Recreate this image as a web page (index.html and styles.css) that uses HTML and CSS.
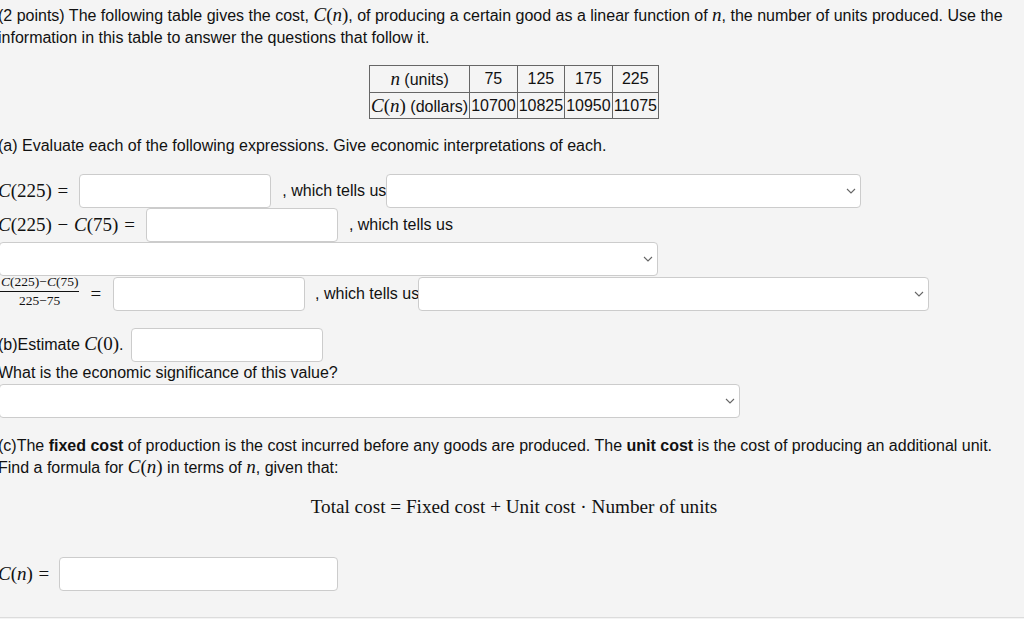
FILE: index.html
```html
<!DOCTYPE html>
<html>
<head>
<meta charset="utf-8">
<link rel="stylesheet" href="styles.css">
</head>
<body>
<div class="page">
  <p class="text intro">(2 points) The following table gives the cost, <span class="m"><i>C</i>(<i>n</i>)</span>, of producing a certain good as a linear function of <span class="m"><i>n</i></span>, the number of units produced. Use the<br>information in this table to answer the questions that follow it.</p>

  <table class="data">
    <tr class="r1"><td class="head"><span class="m"><i>n</i></span> (units)</td><td>75</td><td>125</td><td>175</td><td>225</td></tr>
    <tr class="r2"><td class="head"><span class="m"><i>C</i>(<i>n</i>)</span> (dollars)</td><td>10700</td><td>10825</td><td>10950</td><td>11075</td></tr>
  </table>

  <p class="text part-a">(a) Evaluate each of the following expressions. Give economic interpretations of each.</p>

  <div class="row row-first">
    <span class="math"><i>C</i>(225) =</span>
    <span class="input"></span>
    <span class="text">, which tells us</span>
    <span class="select sel1"><svg class="chev" width="10" height="6" viewBox="0 0 10 6"><path d="M1 1 L5 5 L9 1" fill="none" stroke="#666" stroke-width="1.1"/></svg></span>
  </div>
  <div class="row">
    <span class="math"><i>C</i>(225) − <i>C</i>(75) =</span>
    <span class="input"></span>
    <span class="text">, which tells us</span>
  </div>
  <div class="row">
    <span class="select sel2"><svg class="chev" width="10" height="6" viewBox="0 0 10 6"><path d="M1 1 L5 5 L9 1" fill="none" stroke="#666" stroke-width="1.1"/></svg></span>
  </div>
  <div class="row row-frac">
    <span class="frac"><span class="num"><i>C</i>(225)−<i>C</i>(75)</span><span class="den">225−75</span></span>
    <span class="math eq">=</span>
    <span class="input"></span>
    <span class="text">, which tells us</span>
    <span class="select sel3"><svg class="chev" width="10" height="6" viewBox="0 0 10 6"><path d="M1 1 L5 5 L9 1" fill="none" stroke="#666" stroke-width="1.1"/></svg></span>
  </div>

  <div class="row row-b">
    <span class="text">(b)Estimate <span class="m"><i>C</i>(0)</span>.</span>
    <span class="input"></span>
  </div>
  <p class="text sig">What is the economic significance of this value?</p>
  <div class="row">
    <span class="select sel4"><svg class="chev" width="10" height="6" viewBox="0 0 10 6"><path d="M1 1 L5 5 L9 1" fill="none" stroke="#666" stroke-width="1.1"/></svg></span>
  </div>

  <p class="text part-c">(c)The <b>fixed cost</b> of production is the cost incurred before any goods are produced. The <b>unit cost</b> is the cost of producing an additional unit.<br>Find a formula for <span class="m"><i>C</i>(<i>n</i>)</span> in terms of <span class="m"><i>n</i></span>, given that:</p>

  <p class="formula">Total cost = Fixed cost + Unit cost · Number of units</p>

  <div class="row row-cn">
    <span class="math"><i>C</i>(<i>n</i>) =</span>
    <span class="input wide"></span>
  </div>
</div>
</body>
</html>
```

FILE: styles.css
```css
html, body {
  margin: 0;
  padding: 0;
  overflow: hidden;
  background: #f4f4f4;
}

.page {
  margin-left: -2px;
  width: 1032px;
  height: 618px;
  box-sizing: border-box;
  padding-top: 5px;
  border-bottom: 1px solid #dcdcdc;
  color: #111;
  font-family: "Liberation Sans", Arial, sans-serif;
  font-size: 16px;
}

.text {
  font-family: "Liberation Sans", Arial, sans-serif;
  font-size: 16px;
  line-height: 22px;
  margin: 0;
  white-space: nowrap;
}

.m {
  font-family: "Liberation Serif", "Times New Roman", serif;
  font-size: 19px;
  line-height: 1;
}

.m i, .math i, .num i {
  font-style: italic;
}

.data {
  border-collapse: collapse;
  margin: 16px auto 0;
  font-size: 16px;
}

.data td {
  border: 1px solid #666;
  padding: 0 1px;
  text-align: center;
  box-sizing: border-box;
  white-space: nowrap;
}

.data .r1 td {
  height: 27px;
}

.data .r2 td {
  height: 26px;
}

.data td.head {
  padding: 0 1px;
}

.part-a {
  margin-top: 16px;
}

.row {
  display: flex;
  align-items: center;
  height: 34px;
}

.row-first {
  margin-top: 17px;
}

.row-frac {
  margin-top: 1px;
}

.math {
  font-family: "Liberation Serif", "Times New Roman", serif;
  font-size: 19px;
  white-space: nowrap;
  word-spacing: 1px;
}

.input {
  display: block;
  width: 192px;
  height: 34px;
  box-sizing: border-box;
  background: #fff;
  border: 1px solid #ccc;
  border-radius: 4px;
  margin: 0 11px 0 11px;
}

.row-b .input {
  margin-left: 7px;
}

.input.wide {
  width: 279px;
  margin-left: 10px;
}

.select {
  display: flex;
  align-items: center;
  justify-content: flex-end;
  height: 34px;
  box-sizing: border-box;
  background: #fff;
  border: 1px solid #ccc;
  border-radius: 4px;
  padding-right: 4px;
}

.chev {
  display: block;
}

.sel1 { width: 475px; margin-left: 0; }
.sel2 { width: 659px; margin-left: 1px; }
.sel3 { width: 511px; margin-left: -1px; }
.sel4 { width: 741px; margin-left: 1px; }

.frac {
  display: inline-flex;
  flex-direction: column;
  align-items: center;
  font-family: "Liberation Serif", "Times New Roman", serif;
  font-size: 13.5px;
  line-height: 14px;
  margin-left: 2px;
  margin-bottom: 6px;
}

.frac .num {
  border-bottom: 1px solid #111;
  padding: 0 1px 2px;
}

.frac .den {
  padding-top: 2px;
}

.eq {
  margin-left: 11px;
}

.frac + .eq + .input {
  margin-left: 12px;
  margin-right: 10px;
}

.row-b {
  margin-top: 17px;
}

.sig {
  margin-top: 0;
}

.part-c {
  margin-top: 17px;
}

.formula {
  margin: 15px 0 0;
  text-align: center;
  font-family: "Liberation Serif", "Times New Roman", serif;
  font-size: 19.2px;
  line-height: 26px;
}

.row-cn {
  margin-top: 37px;
}
```
